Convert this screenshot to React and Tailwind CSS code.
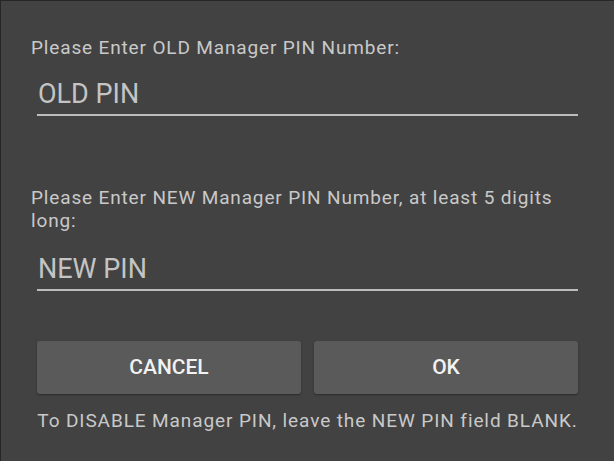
import { useState } from 'react';

export default function App() {
  const [oldPin, setOldPin] = useState('');
  const [newPin, setNewPin] = useState('');

  return (
    <div
      className="w-[614px] h-[461px] overflow-hidden bg-[#424242] border-l border-t border-[#262626] text-[#c9c9c9]"
      style={{ fontFamily: 'Roboto, "Liberation Sans", sans-serif' }}
    >
      {/* Old PIN */}
      <div className="pl-[30px] pr-[30px] pt-[35px]">
        <p className="text-[19px] leading-[23px] tracking-[0.85px]">Please Enter OLD Manager PIN Number:</p>
      </div>
      <div className="mx-[36px] mt-[19px] border-b-2 border-[#bdbdbd] pb-[4px]">
        <input
          value={oldPin}
          onChange={(e) => setOldPin(e.target.value)}
          placeholder="OLD PIN"
          className="w-full bg-transparent outline-none text-[27px] leading-[32px] text-[#cfcfcf] placeholder-[#c4c4c4] px-[1px]"
        />
      </div>

      {/* New PIN */}
      <div className="pl-[30px] pr-[30px] mt-[70px]">
        <p className="text-[19px] leading-[23px] tracking-[0.85px]">
          Please Enter NEW Manager PIN Number, at least 5 digits long:
        </p>
      </div>
      <div className="mx-[36px] mt-[21px] border-b-2 border-[#bdbdbd] pb-[4px]">
        <input
          value={newPin}
          onChange={(e) => setNewPin(e.target.value)}
          placeholder="NEW PIN"
          className="w-full bg-transparent outline-none text-[27px] leading-[32px] text-[#cfcfcf] placeholder-[#c4c4c4] px-[1px]"
        />
      </div>

      {/* Buttons */}
      <div className="mx-[36px] mt-[50px] grid grid-cols-2 gap-[13px]">
        <button className="h-[53px] rounded-[3px] bg-[#5a5a5b] shadow-[0_1px_2px_rgba(0,0,0,0.35)] text-[21px] font-medium text-[#f2f2f2]">
          CANCEL
        </button>
        <button className="h-[53px] rounded-[3px] bg-[#5a5a5b] shadow-[0_1px_2px_rgba(0,0,0,0.35)] text-[21px] font-medium text-[#f2f2f2]">
          OK
        </button>
      </div>

      <p className="mx-[36px] mt-[15px] text-[19px] leading-[23px] tracking-[0.9px] text-center whitespace-nowrap">
        To DISABLE Manager PIN, leave the NEW PIN field BLANK.
      </p>
    </div>
  );
}
